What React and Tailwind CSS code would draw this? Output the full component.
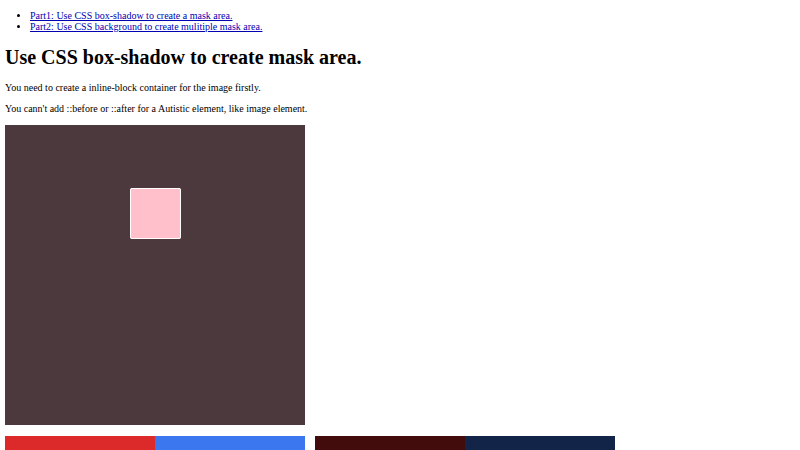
import React from "react";

const links = [
  { href: "#part1", text: "Part1: Use CSS box-shadow to create a mask area." },
  { href: "#part2", text: "Part2: Use CSS background to create mulitiple mask area." },
];

const App = () => {
  return (
    <div className="h-screen overflow-hidden bg-white px-[5px] pt-[10px] text-black font-['Liberation_Serif',serif] text-[10px] leading-[11px]">
      <ul className="list-disc pl-[25px]">
        {links.map((link) => (
          <li key={link.href}>
            <a href={link.href} className="text-[#0000b4] underline">{link.text}</a>
          </li>
        ))}
      </ul>

      <h1 id="part1" className="mt-[14px] text-[20px] leading-[23px] font-bold">
        Use CSS box-shadow to create mask area.
      </h1>
      <p className="mt-[13px]">You need to create a inline-block container for the image firstly.</p>
      <p className="mt-[10px]">
        You cann't add ::before or ::after for a Autistic element, like image element.
      </p>

      {/* the shadow of the box is the mask, clipped by the container */}
      <div className="relative mt-[11px] size-[300px] overflow-hidden bg-[#ffc0cb]">
        <div className="absolute left-[125px] top-[63px] size-[51px] rounded-[2px] border border-white shadow-[0_0_0_400px_rgba(0,0,0,0.7)]" />
      </div>

      <div id="part2" className="mt-[11px] flex gap-[10px]">
        <div className="grid h-[300px] w-[300px] grid-cols-2">
          <div className="bg-[#dc2a2a]" />
          <div className="bg-[#3b78f0]" />
        </div>
        <div className="grid h-[300px] w-[300px] grid-cols-2">
          <div className="bg-[#420c0c]" />
          <div className="bg-[#122448]" />
        </div>
      </div>
    </div>
  );
};

export default App;
